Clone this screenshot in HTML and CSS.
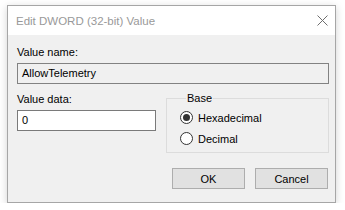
FILE: index.html
```html
<!DOCTYPE html>
<html>
<head>
  <title>Edit DWORD (32-bit) Value</title>
  <link rel="stylesheet" href="styles.css">
</head>
<body>
  <div class="dialog">
    <div class="titlebar">
      <span class="title">Edit DWORD (32-bit) Value</span>
      <svg class="close" width="11" height="11" viewBox="0 0 11 11">
        <path d="M0.5 0.5 L10.5 10.5 M10.5 0.5 L0.5 10.5" stroke="#6e6e6e" stroke-width="1" fill="none"/>
      </svg>
    </div>
    <div class="content">
      <div class="label">Value name:</div>
      <div class="field readonly">AllowTelemetry</div>
      <div class="row">
        <div class="left">
          <div class="label">Value data:</div>
          <div class="field data">0</div>
        </div>
        <fieldset class="base">
          <legend>Base</legend>
          <div class="radio"><span class="dot checked"></span>Hexadecimal</div>
          <div class="radio"><span class="dot"></span>Decimal</div>
        </fieldset>
      </div>
      <div class="buttons">
        <button class="btn">OK</button>
        <button class="btn">Cancel</button>
      </div>
    </div>
  </div>
</body>
</html>
```

FILE: styles.css
```css
body {
  margin: 0;
  background-color: #ffffff;
  font-family: "Liberation Sans", Arial, sans-serif;
  font-size: 11px;
  color: #000000;
}

.dialog {
  margin: 5px 0 0 7px;
  width: 327px;
  height: 196px;
  border: 1px solid #a6a6a6;
  background-color: #f0f0f0;
  box-shadow: 0 2px 8px rgba(0, 0, 0, 0.18);
  display: flex;
  flex-direction: column;
}

.titlebar {
  height: 29px;
  background-color: #ffffff;
  display: flex;
  align-items: center;
  justify-content: space-between;
  padding: 0 7px 0 8px;
}

.title {
  color: #999999;
  font-size: 11.5px;
}

.close {
  display: block;
}

.content {
  padding: 10px 6px 0 9px;
}

.label {
  line-height: 14px;
  height: 14px;
}

.field {
  height: 19px;
  line-height: 19px;
  border: 1px solid #7a7a7a;
  padding: 0 4px;
  margin-top: 4px;
}

.field.readonly {
  background-color: #f0f0f0;
  border-color: #828282;
}

.row {
  display: flex;
  gap: 10px;
  margin-top: 8px;
}

.left {
  width: 139px;
}

.field.data {
  background-color: #ffffff;
}

.base {
  width: 163px;
  box-sizing: border-box;
  margin: -1px 0 0 0;
  height: 62px;
  padding: 2px 0 0 13px;
  border: 1px solid #dcdcdc;
}

.base legend {
  padding: 0 1px;
  margin-left: 6px;
  line-height: 14px;
}

.radio {
  display: flex;
  align-items: center;
  height: 21px;
}

.dot {
  width: 11px;
  height: 11px;
  border: 1px solid #333333;
  border-radius: 50%;
  background-color: #ffffff;
  margin-right: 5px;
  box-sizing: content-box;
  display: flex;
  align-items: center;
  justify-content: center;
}

.dot.checked::after {
  content: "";
  width: 7px;
  height: 7px;
  border-radius: 50%;
  background-color: #333333;
}

.buttons {
  display: flex;
  justify-content: flex-end;
  gap: 10px;
  margin-top: 15px;
  padding-right: 1px;
}

.btn {
  width: 73px;
  height: 21px;
  background-color: #e1e1e1;
  border: 1px solid #adadad;
  font-family: "Liberation Sans", Arial, sans-serif;
  font-size: 11px;
  color: #000000;
  padding: 0;
}
```
